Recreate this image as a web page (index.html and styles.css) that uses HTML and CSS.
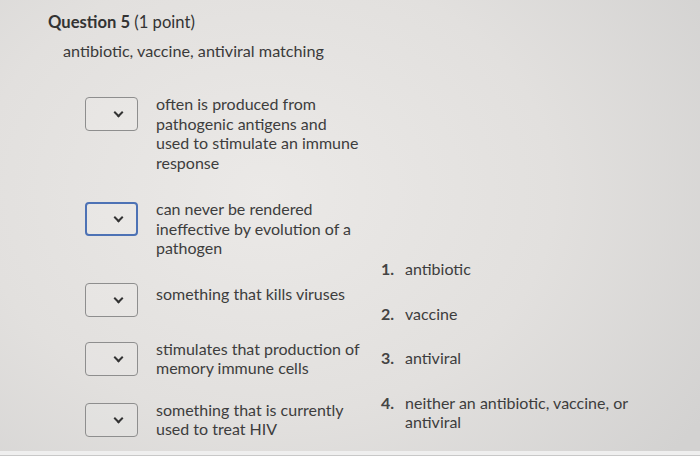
FILE: index.html
```html
<!DOCTYPE html>
<html>
<head>
    <link rel="stylesheet" href="styles.css">
    <title>Question 5</title>
</head>

<body>
    <div class="page">
        <div class="question-header">
            <span class="question-title">Question 5</span> (1 point)
        </div>
        <div class="question-text">antibiotic, vaccine, antiviral matching</div>

        <div class="matching">
            <div class="prompts">
                <div class="prompt-row first">
                    <div class="select"><span class="chevron"></span></div>
                    <div class="prompt-text">often is produced from pathogenic antigens and used to stimulate an immune response</div>
                </div>
                <div class="prompt-row">
                    <div class="select focused"><span class="chevron"></span></div>
                    <div class="prompt-text">can never be rendered ineffective by evolution of a pathogen</div>
                </div>
                <div class="prompt-row single">
                    <div class="select"><span class="chevron"></span></div>
                    <div class="prompt-text">something that kills viruses</div>
                </div>
                <div class="prompt-row">
                    <div class="select"><span class="chevron"></span></div>
                    <div class="prompt-text">stimulates that production of memory immune cells</div>
                </div>
                <div class="prompt-row">
                    <div class="select"><span class="chevron"></span></div>
                    <div class="prompt-text">something that is currently used to treat HIV</div>
                </div>
            </div>

            <ol class="answers">
                <li><span class="num">1.</span><span>antibiotic</span></li>
                <li><span class="num">2.</span><span>vaccine</span></li>
                <li><span class="num">3.</span><span>antiviral</span></li>
                <li><span class="num">4.</span><span>neither an antibiotic, vaccine, or antiviral</span></li>
            </ol>
        </div>
    </div>
    <div class="bottom-edge"></div>
</body>
</html>
```

FILE: styles.css
```css
html, body {
    margin: 0;
    height: 100%;
}
body {
    font-family: Lato, "Open Sans", sans-serif;
    color: #3d3d3d;
    background: radial-gradient(ellipse 75% 90% at 38% 42%, #ebe9e7 0%, #e2e0de 55%, #d3d2d1 100%);
    display: flex;
    flex-direction: column;
    overflow: hidden;
}
.page {
    flex: 1;
    padding: 12px 0 0 48px;
}
.question-header {
    font-size: 16.6px;
    line-height: 20px;
    color: #333;
}
.question-title {
    font-weight: bold;
}
.question-text {
    font-size: 16.2px;
    line-height: 20px;
    margin: 9px 0 0 15px;
    color: #3a3a3a;
}
.matching {
    display: flex;
    align-items: flex-end;
    margin-top: 36px;
}
.prompts {
    display: flex;
    flex-direction: column;
    gap: 25px;
    padding-left: 37px;
    width: 296px;
}
.prompt-row {
    display: flex;
    align-items: flex-start;
    gap: 18px;
}
.prompt-row.first {
    margin-bottom: 5px;
}
.select {
    flex: none;
    width: 51px;
    height: 32px;
    border: 1px solid #8e8e8e;
    border-radius: 4px;
    background: rgba(255, 255, 255, 0.12);
    position: relative;
}
.select.focused {
    border: 2px solid #4d72b5;
    width: 49px;
    height: 30px;
}
.chevron {
    position: absolute;
    left: 29px;
    top: 11px;
    width: 5px;
    height: 5px;
    border-right: 2px solid #333;
    border-bottom: 2px solid #333;
    transform: rotate(45deg);
}
.focused .chevron {
    left: 28px;
    top: 10px;
}
.prompt-text {
    width: 206px;
    font-size: 16px;
    line-height: 19.5px;
    margin-top: -3px;
}
.single .prompt-text {
    margin-top: 1px;
}
.answers {
    list-style: none;
    margin: 0 0 7px 0;
    padding: 0;
    width: 260px;
    font-size: 16px;
    line-height: 19.5px;
}
.answers li {
    display: flex;
    margin-top: 25px;
}
.answers li:first-child {
    margin-top: 0;
}
.num {
    flex: none;
    width: 24px;
    font-weight: bold;
    color: #444;
}
.bottom-edge {
    height: 4px;
    background: #efefef;
    border-bottom: 1px solid #c8c8c8;
}
```
